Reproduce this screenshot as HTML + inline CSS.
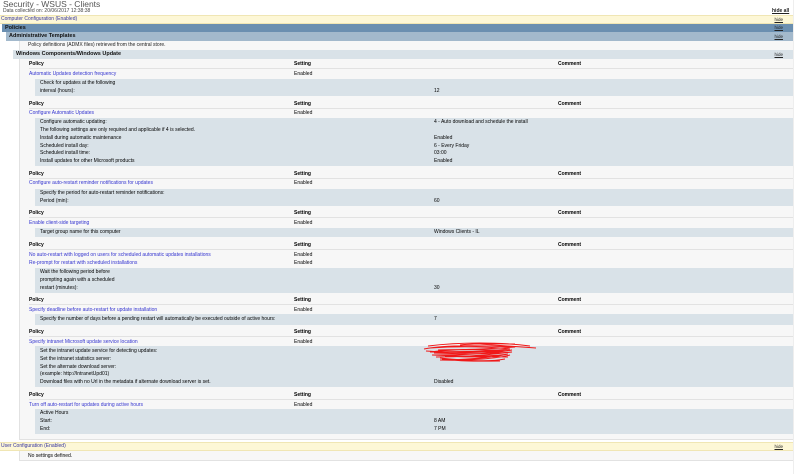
<!DOCTYPE html>
<html><head><meta charset="utf-8"><style>
*{margin:0;padding:0;box-sizing:border-box}
body{width:800px;height:474px;background:#fff;font-family:"Liberation Sans",sans-serif;font-size:5px;color:#000;position:relative;overflow:hidden}
.a{position:absolute;white-space:nowrap;line-height:8px;height:8px}
.bar{position:absolute;height:9px;line-height:9px;font-weight:bold;font-size:5.5px;padding-left:3px}
.hide{position:absolute;right:10px;top:0;font-size:4.5px;color:#222;font-weight:normal;text-decoration:underline}
.h{position:absolute;left:29px;width:764px;height:8px;border-bottom:1px solid #e2e2e2;font-weight:bold}
.h span{position:absolute;top:0;line-height:7px}
.lk{color:#3434d0}
.box{position:absolute;left:35px;width:758px;background:#d9e2e8}
</style></head><body>
<div class="a" style="left:3px;top:-1px;font-size:8.5px;line-height:10px;height:10px;color:#555">Security - WSUS - Clients</div>
<div class="a" style="left:3px;top:7px;color:#444">Data collected on: 20/06/2017 12:38:38</div>
<div class="a" style="left:772px;top:7px;font-weight:bold;text-decoration:underline;color:#222">hide all</div>
<div style="position:absolute;left:793px;top:0;width:7px;height:474px;background:#fff;border-left:1px solid #eee"></div>
<div style="position:absolute;left:19px;top:41px;width:774px;height:399px;background:#f7f7f7;border-left:1px solid #e2e2e2;border-bottom:1px solid #e2e2e2"></div>
<div class="bar" style="left:0;top:15px;width:793px;background:#fdf7d6;border-top:1px solid #f0e6b4;border-bottom:1px solid #f0e6b4;color:#3434a0;font-weight:normal;font-size:5px;padding-left:1px;line-height:7px">Computer Configuration (Enabled)<span class="hide" style="line-height:7px">hide</span></div>
<div class="bar" style="left:2px;top:24px;width:791px;height:8px;line-height:8px;background:#6b8fb0;color:#111">Policies<span class="hide">hide</span></div>
<div class="bar" style="left:6px;top:32px;width:787px;background:#a3b9cc;color:#111">Administrative Templates<span class="hide">hide</span></div>
<div class="a" style="left:28px;top:41px;color:#222">Policy definitions (ADMX files) retrieved from the central store.</div>
<div class="bar" style="left:13px;top:50px;width:780px;background:#d9e2e8;color:#111">Windows Components/Windows Update<span class="hide">hide</span></div>

<div class="h" style="top:61px"><span style="left:0">Policy</span><span style="left:265px">Setting</span><span style="left:529px">Comment</span></div>
<div class="a lk" style="left:29px;top:70px">Automatic Updates detection frequency</div><div class="a" style="left:294px;top:70px">Enabled</div>
<div class="box" style="top:79px;height:17px"></div>
<div class="a" style="left:40px;top:79px">Check for updates at the following</div>
<div class="a" style="left:40px;top:87px">interval (hours):</div><div class="a" style="left:434px;top:87px">12</div>

<div class="h" style="top:101px"><span style="left:0">Policy</span><span style="left:265px">Setting</span><span style="left:529px">Comment</span></div>
<div class="a lk" style="left:29px;top:109px">Configure Automatic Updates</div><div class="a" style="left:294px;top:109px">Enabled</div>
<div class="box" style="top:118px;height:48px"></div>
<div class="a" style="left:40px;top:118px">Configure automatic updating:</div><div class="a" style="left:434px;top:118px">4 - Auto download and schedule the install</div>
<div class="a" style="left:40px;top:126px">The following settings are only required and applicable if 4 is selected.</div>
<div class="a" style="left:40px;top:134px">Install during automatic maintenance</div><div class="a" style="left:434px;top:134px">Enabled</div>
<div class="a" style="left:40px;top:142px">Scheduled install day:</div><div class="a" style="left:434px;top:142px">6 - Every Friday</div>
<div class="a" style="left:40px;top:149px">Scheduled install time:</div><div class="a" style="left:434px;top:149px">03:00</div>
<div class="a" style="left:40px;top:157px">Install updates for other Microsoft products</div><div class="a" style="left:434px;top:157px">Enabled</div>

<div class="h" style="top:171px"><span style="left:0">Policy</span><span style="left:265px">Setting</span><span style="left:529px">Comment</span></div>
<div class="a lk" style="left:29px;top:179px">Configure auto-restart reminder notifications for updates</div><div class="a" style="left:294px;top:179px">Enabled</div>
<div class="box" style="top:189px;height:17px"></div>
<div class="a" style="left:40px;top:189px">Specify the period for auto-restart reminder notifications:</div>
<div class="a" style="left:40px;top:197px">Period (min):</div><div class="a" style="left:434px;top:197px">60</div>

<div class="h" style="top:210px"><span style="left:0">Policy</span><span style="left:265px">Setting</span><span style="left:529px">Comment</span></div>
<div class="a lk" style="left:29px;top:219px">Enable client-side targeting</div><div class="a" style="left:294px;top:219px">Enabled</div>
<div class="box" style="top:228px;height:9px"></div>
<div class="a" style="left:40px;top:228px">Target group name for this computer</div><div class="a" style="left:434px;top:228px">Windows Clients - IL</div>

<div class="h" style="top:242px"><span style="left:0">Policy</span><span style="left:265px">Setting</span><span style="left:529px">Comment</span></div>
<div class="a lk" style="left:29px;top:251px">No auto-restart with logged on users for scheduled automatic updates installations</div><div class="a" style="left:294px;top:251px">Enabled</div>
<div class="a lk" style="left:29px;top:259px">Re-prompt for restart with scheduled installations</div><div class="a" style="left:294px;top:259px">Enabled</div>
<div class="box" style="top:268px;height:25px"></div>
<div class="a" style="left:40px;top:268px">Wait the following period before</div>
<div class="a" style="left:40px;top:276px">prompting again with a scheduled</div>
<div class="a" style="left:40px;top:284px">restart (minutes):</div><div class="a" style="left:434px;top:284px">30</div>

<div class="h" style="top:297px"><span style="left:0">Policy</span><span style="left:265px">Setting</span><span style="left:529px">Comment</span></div>
<div class="a lk" style="left:29px;top:306px">Specify deadline before auto-restart for update installation</div><div class="a" style="left:294px;top:306px">Enabled</div>
<div class="box" style="top:314px;height:11px"></div>
<div class="a" style="left:40px;top:315px">Specify the number of days before a pending restart will automatically be executed outside of active hours:</div><div class="a" style="left:434px;top:315px">7</div>

<div class="h" style="top:329px"><span style="left:0">Policy</span><span style="left:265px">Setting</span><span style="left:529px">Comment</span></div>
<div class="a lk" style="left:29px;top:338px">Specify intranet Microsoft update service location</div><div class="a" style="left:294px;top:338px">Enabled</div>
<div class="box" style="top:346px;height:41px"></div>
<div class="a" style="left:40px;top:347px">Set the intranet update service for detecting updates:</div>
<div class="a" style="left:40px;top:355px">Set the intranet statistics server:</div>
<div class="a" style="left:40px;top:363px">Set the alternate download server:</div>
<div class="a" style="left:40px;top:370px">(example: http://IntranetUpd01)</div>
<div class="a" style="left:40px;top:378px">Download files with no Url in the metadata if alternate download server is set.</div><div class="a" style="left:434px;top:378px">Disabled</div>
<svg style="position:absolute;left:420px;top:340px" width="120" height="25"><g fill="none" stroke="#f01818" stroke-width="1">
<path d="M8 6 C40 2 80 2 110 6 M4 9 C30 4 70 6 95 7 C60 10 30 9 10 12 C40 11 80 12 92 10 C70 14 40 15 12 15 C40 16 70 17 88 14 C70 18 40 20 20 20 C50 21 80 18 90 15 M20 18 C50 21 70 22 85 19 M60 4 L116 8 M6 11 C30 13 60 13 85 11 M10 8 C40 6 70 7 90 9 C60 12 30 12 14 13 C40 14 70 14 92 12 C60 16 30 17 16 17 M18 10 C40 9 60 10 80 10 M25 16 C50 18 70 16 88 17 M22 19 C45 22 65 21 80 21 M40 5 C60 3 80 4 95 4"/>
</g></svg>

<div class="h" style="top:392px"><span style="left:0">Policy</span><span style="left:265px">Setting</span><span style="left:529px">Comment</span></div>
<div class="a lk" style="left:29px;top:401px">Turn off auto-restart for updates during active hours</div><div class="a" style="left:294px;top:401px">Enabled</div>
<div class="box" style="top:409px;height:25px"></div>
<div class="a" style="left:40px;top:409px">Active Hours</div>
<div class="a" style="left:40px;top:417px">Start:</div><div class="a" style="left:434px;top:417px">8 AM</div>
<div class="a" style="left:40px;top:425px">End:</div><div class="a" style="left:434px;top:425px">7 PM</div>

<div class="bar" style="left:0;top:442px;width:793px;background:#fdf7d6;border-top:1px solid #f0e6b4;border-bottom:1px solid #f0e6b4;color:#3434a0;font-weight:normal;font-size:5px;padding-left:1px;line-height:7px">User Configuration (Enabled)<span class="hide" style="line-height:7px">hide</span></div>
<div style="position:absolute;left:19px;top:451px;width:774px;height:10px;background:#f7f7f7;border-left:1px solid #e2e2e2;border-bottom:1px solid #e2e2e2"></div>
<div class="a" style="left:28px;top:452px">No settings defined.</div>
</body></html>
